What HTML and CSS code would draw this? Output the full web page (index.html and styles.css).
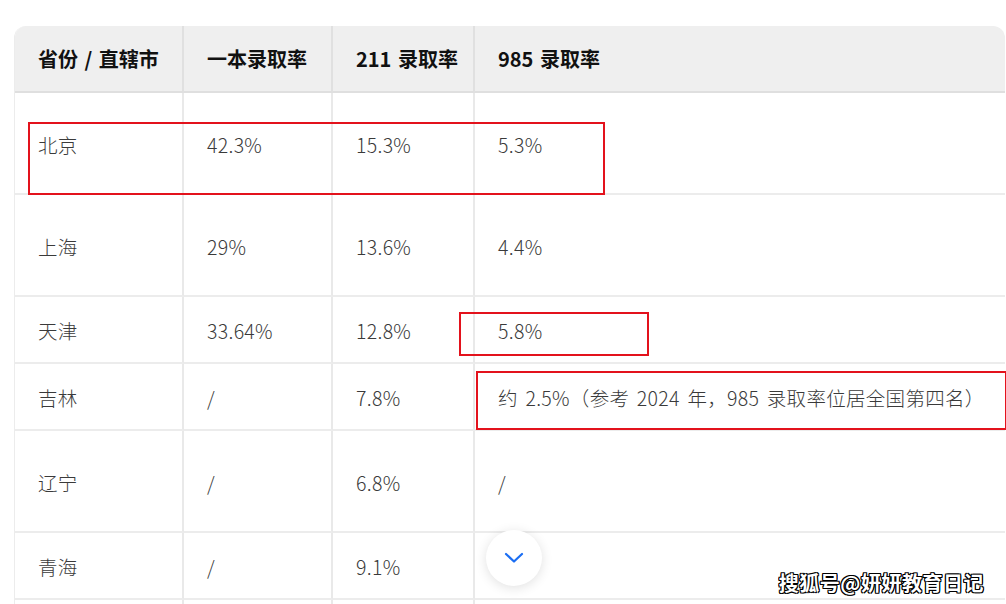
FILE: index.html
```html
<!DOCTYPE html>
<html lang="zh-CN">
<head>
  <meta charset="UTF-8">
  <meta name="viewport" content="width=device-width, initial-scale=1.0">
  <title>各省录取率</title>
  <link rel="stylesheet" href="styles.css">
</head>
<body>
  <div class="page">
    <div class="table-wrap">
      <table class="rate-table">
        <thead>
          <tr>
            <th class="col-prov">省份 / 直辖市</th>
            <th class="col-one">一本录取率</th>
            <th class="col-211">211 录取率</th>
            <th class="col-985">985 录取率</th>
          </tr>
        </thead>
        <tbody>
          <tr class="tall">
            <td>北京</td>
            <td>42.3%</td>
            <td>15.3%</td>
            <td>5.3%</td>
          </tr>
          <tr class="tall">
            <td>上海</td>
            <td>29%</td>
            <td>13.6%</td>
            <td>4.4%</td>
          </tr>
          <tr>
            <td>天津</td>
            <td>33.64%</td>
            <td>12.8%</td>
            <td>5.8%</td>
          </tr>
          <tr>
            <td>吉林</td>
            <td>/</td>
            <td>7.8%</td>
            <td>约 2.5%（参考 2024 年，985 录取率位居全国第四名）</td>
          </tr>
          <tr class="tall">
            <td>辽宁</td>
            <td>/</td>
            <td>6.8%</td>
            <td>/</td>
          </tr>
          <tr>
            <td>青海</td>
            <td>/</td>
            <td>9.1%</td>
            <td></td>
          </tr>
          <tr>
            <td></td>
            <td></td>
            <td></td>
            <td></td>
          </tr>
        </tbody>
      </table>
    </div>

    <!-- red highlight marks drawn over the table -->
    <div class="mark mark-beijing"></div>
    <div class="mark mark-tianjin"></div>
    <div class="mark mark-jilin"></div>

    <button class="scroll-down" aria-label="向下">
      <svg width="20" height="12" viewBox="0 0 20 12">
        <path d="M2 2 L10 9.5 L18 2" fill="none" stroke="#1b6ef3" stroke-width="2.2" stroke-linecap="round" stroke-linejoin="round"/>
      </svg>
    </button>

    <div class="watermark">搜狐号@妍妍教育日记</div>
  </div>
</body>
</html>
```

FILE: styles.css
```css
body {
  margin: 0;
  padding: 0;
  background-color: #fff;
  font-family: "Noto Sans CJK SC", "Noto Sans", sans-serif;
  overflow: hidden;
}

.page {
  position: relative;
  width: 1006px;
  height: 604px;
  padding: 26px 0 0 14px;
  box-sizing: border-box;
}

.table-wrap {
  width: 990px;
  border-left: 1px solid #ececec;
  border-radius: 12px 12px 0 0;
  overflow: hidden;
}

.rate-table {
  width: 100%;
  border-collapse: separate;
  border-spacing: 0;
  table-layout: fixed;
}

.rate-table th,
.rate-table td {
  box-sizing: border-box;
  padding: 0 0 0 23px;
  text-align: left;
  vertical-align: middle;
  border-bottom: 2px solid #ececec;
  border-right: 2px solid #e9e9e9;
  white-space: nowrap;
}

.rate-table th:last-child,
.rate-table td:last-child {
  border-right: none;
}

.rate-table th {
  height: 67px;
  background-color: #efefef;
  color: #111;
  font-size: 20px;
  font-weight: bold;
  word-spacing: 2px;
  border-bottom-color: #dfdfdf;
  border-right-color: #e0e0e0;
}

.rate-table td {
  height: 67px;
  padding-top: 2px;
  color: #3a3a3a;
  font-size: 19.5px;
  font-weight: 300;
  letter-spacing: 0.3px;
  word-spacing: 3px;
}

.rate-table tr.tall td {
  height: 102px;
}

.col-prov { width: 169px; }
.col-one { width: 149px; }
.col-211 { width: 142px; }

.mark {
  position: absolute;
  border: 2px solid #e3121c;
  box-sizing: border-box;
}

.mark-beijing {
  left: 28px;
  top: 122px;
  width: 577px;
  height: 73px;
}

.mark-tianjin {
  left: 459px;
  top: 312px;
  width: 190px;
  height: 44px;
}

.mark-jilin {
  left: 476px;
  top: 371px;
  width: 531px;
  height: 59px;
}

.scroll-down {
  position: absolute;
  left: 486px;
  top: 530px;
  width: 56px;
  height: 56px;
  border: none;
  border-radius: 50%;
  background-color: #fff;
  box-shadow: 0 2px 12px rgba(0, 0, 0, 0.12);
  display: flex;
  align-items: center;
  justify-content: center;
  padding: 0;
}

.watermark {
  position: absolute;
  right: 22px;
  top: 568px;
  font-size: 20px;
  font-weight: bold;
  color: #fff;
  letter-spacing: 0.5px;
  text-shadow: 1px 1px 0 #000, -1px -1px 0 #000, 1px -1px 0 #000, -1px 1px 0 #000, 1px 0 0 #000, -1px 0 0 #000;
}
```
